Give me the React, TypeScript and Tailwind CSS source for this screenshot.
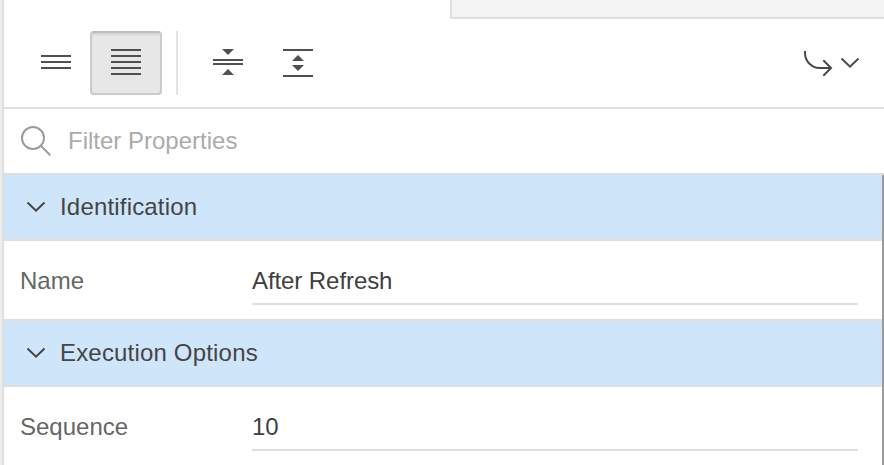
import type { ReactNode } from "react";

function ChevronDown({ className = "" }: { className?: string }) {
  return (
    <svg className={className} width="20" height="12" viewBox="0 0 20 12" fill="none" stroke="currentColor" strokeWidth="2">
      <path d="M1.5 1.5 10 9.6l8.5-8.1" />
    </svg>
  );
}

function LinesIcon({ rows }: { rows: number[] }) {
  return (
    <svg width="30" height="30" viewBox="0 0 30 30" fill="#505050">
      {rows.map((y) => (
        <rect key={y} x="0" y={y} width="30" height="2" />
      ))}
    </svg>
  );
}

function Toolbar() {
  return (
    <div className="flex h-[90px] shrink-0 items-start border-b-2 border-[#dfdfdf] pt-3 pl-4 text-[#4a4a4a]">
      <button className="flex h-16 w-[70px] items-center justify-center pl-[2px]" aria-label="Show common">
        <LinesIcon rows={[7, 13, 19]} />
      </button>
      <button
        className="flex h-16 w-[72px] items-center justify-center rounded-[4px] border-2 border-[#cbcbcb] border-t-[#bdbdbd] bg-[#e7e7e7] shadow-[inset_0_3px_2px_-1px_rgba(0,0,0,0.08)]"
        aria-label="Show all"
      >
        <LinesIcon rows={[1, 7, 13, 19, 25]} />
      </button>
      <div className="ml-[14px] h-16 w-[2px] bg-[#e3e3e3]" />
      <button className="ml-[35px] flex h-16 w-[30px] items-center" aria-label="Collapse all">
        <svg width="30" height="30" viewBox="0 0 30 30" fill="#505050">
          <path d="M9 1h12l-6 6z" />
          <rect y="11" width="30" height="2" />
          <rect y="15" width="30" height="2" />
          <path d="M9 27h12l-6-6z" />
        </svg>
      </button>
      <button className="ml-10 flex h-16 w-[30px] items-center" aria-label="Expand all">
        <svg width="30" height="30" viewBox="0 0 30 30" fill="#505050">
          <rect y="1" width="30" height="2" />
          <path d="M9 13h12l-6-6z" />
          <path d="M9 17h12l-6 6z" />
          <rect y="27" width="30" height="2" />
        </svg>
      </button>
      <button className="mr-6 ml-auto flex h-16 items-center gap-[7px]" aria-label="Go to group">
        <svg className="mt-[2px]" width="30" height="28" viewBox="0 0 30 28" fill="none" stroke="currentColor" strokeWidth="2">
          <path d="M2 1v2c0 8 6.5 15 14.5 15H28" />
          <path d="m20.3 10.3 7.7 7.7-7.7 7.7" />
        </svg>
        <ChevronDown />
      </button>
    </div>
  );
}

function GroupHeader({ title }: { title: string }) {
  return (
    <div className="flex h-[66px] shrink-0 items-center border-b-2 border-[#dfdfdf] bg-[#cfe5fa] pl-[22px] text-[#454545]">
      <ChevronDown />
      <span className="ml-[14px] tracking-[0.18px]">{title}</span>
    </div>
  );
}

function Property({ label, children }: { label: string; children: ReactNode }) {
  return (
    <div className="flex h-20 shrink-0 border-b-2 border-[#dfdfdf] pt-4 pr-6 pl-4">
      <div className="flex h-12 w-[232px] items-center text-[#666666]">{label}</div>
      <div className="flex h-12 flex-1 items-center border-b-2 border-[#dfdfdf] pt-[2px] tracking-[-0.08px] text-[#404040]">
        {children}
      </div>
    </div>
  );
}

export default function App() {
  return (
    <div className="flex h-[465px] w-[884px] overflow-hidden bg-white font-['Liberation_Sans',Arial,sans-serif] text-2xl whitespace-nowrap">
      <div className="w-1 shrink-0 border-r-2 border-[#dfdfdf] bg-[#ededed]" />
      <main className="flex min-w-0 flex-1 flex-col">
        <div className="flex h-[19px] shrink-0 justify-end">
          <div className="w-[434px] border-b-2 border-l-2 border-[#dfdfdf] bg-[#f3f3f3]" />
        </div>
        <Toolbar />
        <div className="flex h-[66px] shrink-0 items-center border-b-2 border-[#dfdfdf] pl-4">
          <svg width="32" height="32" viewBox="0 0 32 32" fill="none" stroke="#9b9b9b" strokeWidth="2">
            <circle cx="13" cy="13" r="11" />
            <path d="m20.8 20.8 9.6 9.6" />
          </svg>
          <span className="ml-4 text-[#ababab]">Filter Properties</span>
        </div>
        <div className="flex min-h-0 flex-1">
          <div className="flex min-w-0 flex-1 flex-col">
            <GroupHeader title="Identification" />
            <Property label="Name">After Refresh</Property>
            <GroupHeader title="Execution Options" />
            <Property label="Sequence">10</Property>
          </div>
          <div className="w-[2px] shrink-0 bg-[#9b9b9b]" />
        </div>
      </main>
    </div>
  );
}
